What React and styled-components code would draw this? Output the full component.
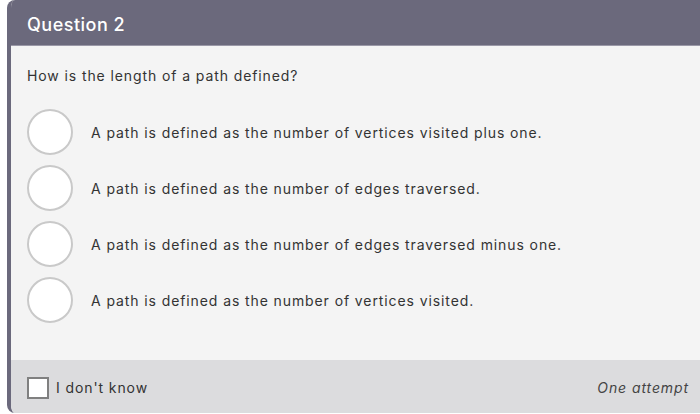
import styled, { createGlobalStyle } from "styled-components";

const GlobalStyle = createGlobalStyle`
  html, body {
    margin: 0;
    padding: 0;
    background: #ffffff;
    overflow: hidden;
  }
  body {
    font-family: Inter, "Noto Sans", sans-serif;
    color: #333333;
    letter-spacing: 0.9px;
  }
`;

const Page = styled.div`
  padding-left: 7px;
  width: 720px;
  height: 414px;
`;

const Card = styled.div`
  width: 720px;
  height: 413px;
  display: flex;
  flex-direction: column;
  background: #f4f4f4;
  border-left: 4px solid #6b697c;
  border-radius: 8px;
  overflow: hidden;
`;

const Header = styled.div`
  height: 46px;
  box-sizing: border-box;
  display: flex;
  align-items: center;
  padding: 4px 0 0 16px;
  background: #6b697c;
  border-bottom: 1px solid #9a98a7;
  color: #ffffff;
  font-size: 18px;
  font-weight: 500;
  letter-spacing: 0.5px;
`;

const Body = styled.div`
  flex: 1;
  padding: 21px 16px 0;
`;

const Prompt = styled.p`
  margin: 0 0 24px;
  font-size: 14px;
  line-height: 18px;
  color: #333333;
`;

const Options = styled.div`
  display: flex;
  flex-direction: column;
  gap: 10px;
`;

const Option = styled.label`
  display: flex;
  align-items: center;
  gap: 18px;
  font-size: 14px;
  color: #333333;
  cursor: pointer;
`;

const Radio = styled.span`
  width: 46px;
  height: 46px;
  box-sizing: border-box;
  border-radius: 50%;
  border: 2px solid #c9c9c9;
  background: #ffffff;
  flex-shrink: 0;
`;

const Footer = styled.div`
  height: 53px;
  box-sizing: border-box;
  display: flex;
  align-items: center;
  justify-content: space-between;
  padding: 2px 42px 0 16px;
  background: #dcdcde;
  font-size: 14px;
`;

const DontKnow = styled.label`
  display: flex;
  align-items: center;
  gap: 7px;
  color: #333333;
`;

const Checkbox = styled.span`
  width: 22px;
  height: 22px;
  box-sizing: border-box;
  border: 2px solid #808080;
  background: #ffffff;
`;

const Attempts = styled.span`
  font-style: italic;
  color: #444444;
`;

const options = [
  "A path is defined as the number of vertices visited plus one.",
  "A path is defined as the number of edges traversed.",
  "A path is defined as the number of edges traversed minus one.",
  "A path is defined as the number of vertices visited.",
];

export default function App() {
  return (
    <>
      <GlobalStyle />
      <Page>
        <Card>
          <Header>Question 2</Header>
          <Body>
            <Prompt>How is the length of a path defined?</Prompt>
            <Options>
              {options.map((text) => (
                <Option key={text}>
                  <Radio />
                  {text}
                </Option>
              ))}
            </Options>
          </Body>
          <Footer>
            <DontKnow>
              <Checkbox />
              I don't know
            </DontKnow>
            <Attempts>One attempt</Attempts>
          </Footer>
        </Card>
      </Page>
    </>
  );
}
